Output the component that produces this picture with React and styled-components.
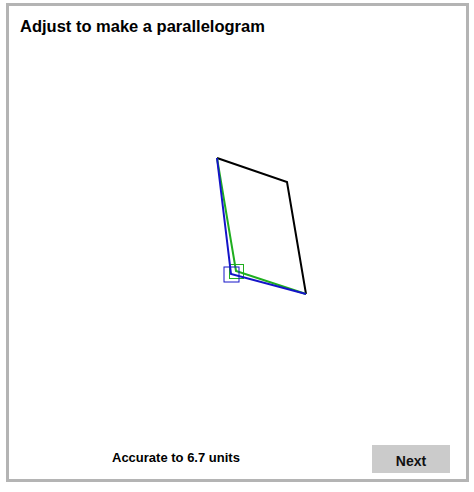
import React from 'react';
import styled, { createGlobalStyle } from 'styled-components';

const GlobalStyle = createGlobalStyle`
  html, body {
    margin: 0;
    padding: 0;
    background: #ffffff;
  }
  body {
    font-family: 'Liberation Sans', Arial, sans-serif;
  }
`;

// fixed points of the shape, in page coordinates
const TOP_LEFT = [217, 158];
const TOP_RIGHT = [287, 182];
const BOTTOM_RIGHT = [306, 294];
const target = [236, 271];
const handle = [231, 274];

const pts = (list) => list.map((p) => p.join(',')).join(' ');

const Frame = styled.div`
  box-sizing: border-box;
  width: 463px;
  height: 479px;
  margin: 3px 0 0 6px;
  border: 3px solid #b4b4b4;
  display: flex;
  flex-direction: column;
`;

const Title = styled.h1`
  margin: 0;
  padding: 11px 0 0 11px;
  font-size: 16.5px;
  line-height: 19px;
  font-weight: bold;
  color: #000;
`;

const Canvas = styled.svg`
  display: block;
  width: 457px;
  height: 409px;
`;

const Footer = styled.div`
  display: flex;
  align-items: center;
  justify-content: space-between;
  height: 28px;
  padding: 0 16px 6px 103px;
`;

const Status = styled.span`
  font-size: 13px;
  font-weight: bold;
  color: #000;
  margin-bottom: 3px;
`;

const NextButton = styled.button`
  box-sizing: border-box;
  width: 78px;
  height: 28px;
  border: none;
  background: #cbcbcb;
  font-family: 'Liberation Sans', Arial, sans-serif;
  font-size: 14px;
  font-weight: bold;
  color: #111;
  padding: 3px 0 0;
`;

const Handle = ({ at, size, color }) => (
  <rect
    x={at[0] - size / 2 + 0.5}
    y={at[1] - size / 2 + 0.5}
    width={size}
    height={size}
    fill="none"
    stroke={color}
    strokeWidth="1"
  />
);

export default function App() {
  return (
    <>
      <GlobalStyle />
      <Frame>
        <Title>Adjust to make a parallelogram</Title>
        <Canvas viewBox="9 36 457 409">
          <polyline
            points={pts([TOP_LEFT, TOP_RIGHT, BOTTOM_RIGHT])}
            fill="none"
            stroke="#000"
            strokeWidth="2"
          />
          <polyline
            points={pts([TOP_LEFT, target, BOTTOM_RIGHT])}
            fill="none"
            stroke="#1fae1f"
            strokeWidth="2"
          />
          <Handle at={target} size={14} color="#1fae1f" />
          <polyline
            points={pts([TOP_LEFT, handle, BOTTOM_RIGHT])}
            fill="none"
            stroke="#1414c8"
            strokeWidth="2"
          />
          <Handle at={handle} size={15} color="#1414c8" />
        </Canvas>
        <Footer>
          <Status>Accurate to 6.7 units</Status>
          <NextButton>Next</NextButton>
        </Footer>
      </Frame>
    </>
  );
}
